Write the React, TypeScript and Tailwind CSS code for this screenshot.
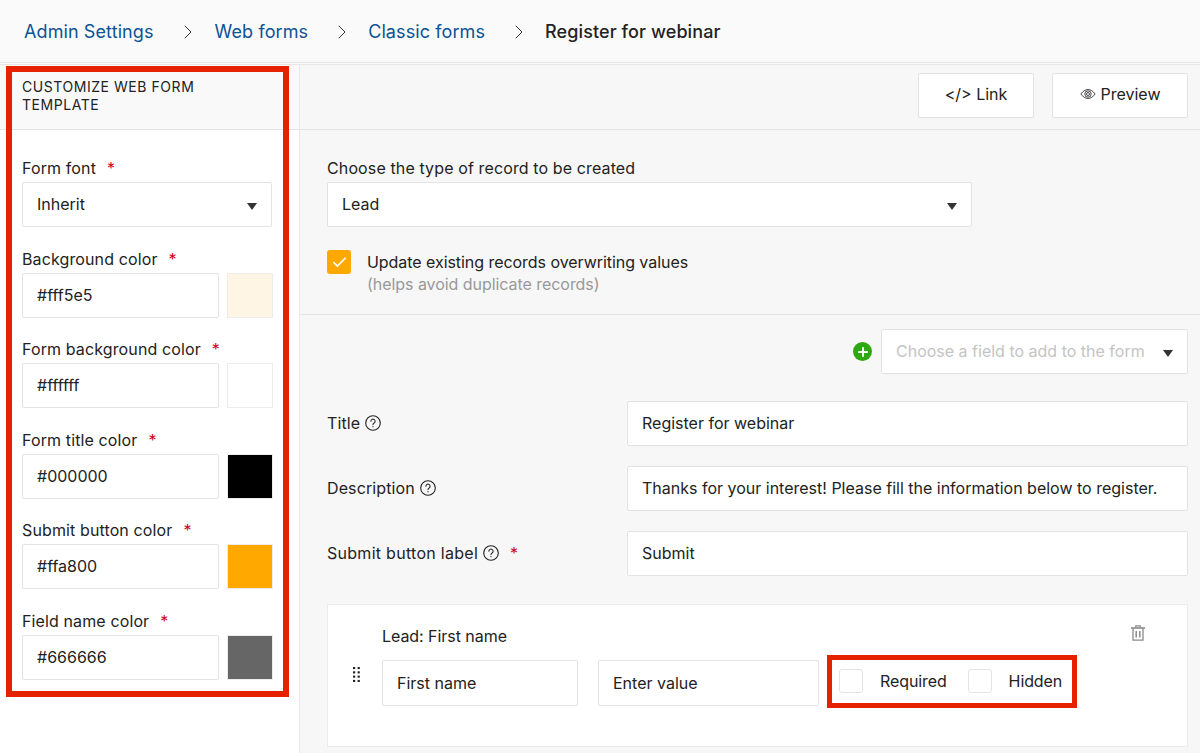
import { ChevronRight, Check, Plus } from 'lucide-react';

const colorFields = [
  { label: 'Background color', value: '#fff5e5', swatch: 'bg-[#fff5e5]' },
  { label: 'Form background color', value: '#ffffff', swatch: 'bg-white' },
  { label: 'Form title color', value: '#000000', swatch: 'bg-black' },
  { label: 'Submit button color', value: '#ffa800', swatch: 'bg-[#ffa800]' },
  { label: 'Field name color', value: '#666666', swatch: 'bg-[#666666]' },
];

const box = 'flex h-[45px] items-center rounded-[2px] border border-[#e3e3e3] bg-white pl-[14px] pr-[14px] text-[#222]';
const crumb = 'ml-[22px] mr-[15px] h-[24px] w-[24px] text-[#333]';

function Star() {
  return <span className="ml-[11px] text-[#d0021b]">*</span>;
}

function Caret() {
  return <span className="ml-auto mt-[5px] h-0 w-0 border-x-[5.5px] border-t-[7px] border-x-transparent border-t-[#333]" />;
}

function Help() {
  return (
    <svg viewBox="0 0 16 16" className="ml-[5px] h-4 w-4 shrink-0 text-[#222]" fill="none" stroke="currentColor" strokeWidth="1.1">
      <circle cx="8" cy="8" r="7.3" />
      <path d="M5.9 6.2a2.1 2.1 0 1 1 3.2 1.8c-.7.4-1.1.8-1.1 1.6" strokeLinecap="round" />
      <circle cx="8" cy="11.7" r=".6" fill="currentColor" stroke="none" />
    </svg>
  );
}

function Eye() {
  return (
    <svg viewBox="0 0 18 12" className="mr-[5px] h-[12px] w-[16px] text-[#333]" fill="none" stroke="currentColor" strokeWidth="1">
      <path d="M1 6c2-3 5-5 8-5s6 2 8 5c-2 3-5 5-8 5S3 9 1 6z" />
      <circle cx="9" cy="6" r="3.6" />
      <circle cx="9" cy="6" r="1.7" />
    </svg>
  );
}

function Grip() {
  return (
    <svg viewBox="0 0 7 15" className="h-[15px] w-[7px] text-[#222]" fill="currentColor">
      {[0, 4.3, 8.6, 12.9].map(y => (
        <g key={y}>
          <rect x="0" y={y} width="2.2" height="2.1" />
          <rect x="4.6" y={y} width="2.2" height="2.1" />
        </g>
      ))}
    </svg>
  );
}

function Trash() {
  return (
    <svg viewBox="0 0 16 16" className="-mt-[1px] h-[16px] w-[16px] text-[#8a8a8a]" fill="none" stroke="currentColor" strokeWidth="1.3">
      <path d="M1 3h14" strokeWidth="1.6" />
      <path d="M5.8 2.6V.8h4.4v1.8" />
      <path d="M3 3.4v11.8h10V3.4" />
      <path d="M6.2 6v6.6M9.8 6v6.6" strokeWidth="1.5" />
    </svg>
  );
}

function FormRow({ children, value }: { children: React.ReactNode; value: string }) {
  return (
    <div className="flex items-center">
      <div className="flex w-[300px] items-center pb-[2px] tracking-[0.12px]">{children}</div>
      <div className={`${box} flex-1 pb-[2px]`}>{value}</div>
    </div>
  );
}

export default function App() {
  return (
    <div className="relative h-[753px] w-[1200px] overflow-hidden bg-white text-[16px] leading-[20px] text-[#222] [font-family:Inter,'Noto_Sans',sans-serif]">
      {/* Breadcrumb */}
      <div className="flex h-[65px] items-center border-b-[3px] border-double border-[#e6e6e6] bg-[#fafafa] pl-[24px] pt-[2px] text-[18px] tracking-[0.1px]">
        <span className="text-[#0b5394]">Admin Settings</span>
        <ChevronRight className={crumb} strokeWidth={1} />
        <span className="text-[#0b5394]">Web forms</span>
        <ChevronRight className={crumb} strokeWidth={1} />
        <span className="-ml-px text-[#0b5394]">Classic forms</span>
        <ChevronRight className={crumb} strokeWidth={1} />
        <span className="-ml-px font-medium text-[#222]">Register for webinar</span>
      </div>

      <div className="flex h-[688px]">
        {/* Template sidebar */}
        <div className="w-[299px] shrink-0 bg-white">
          <div className="flex h-[65px] items-center border-b-[1.5px] border-[#e3e3e3] bg-[#f9f9f9] pb-[2px] pl-[22px] pr-[40px] text-[14px] leading-[18px] tracking-[0.55px]">
            CUSTOMIZE WEB FORM TEMPLATE
          </div>
          <div className="flex flex-col gap-[21.6px] pl-[22px] pr-[27px] pt-[28px]">
            <div>
              <div className="flex h-[24px] items-start tracking-[0.12px]">Form font<Star /></div>
              <div className={`${box} pb-[2px]`}>Inherit<Caret /></div>
            </div>
            {colorFields.map(f => (
              <div key={f.label}>
                <div className="flex h-[24px] items-start tracking-[0.12px]">{f.label}<Star /></div>
                <div className="flex gap-[8px]">
                  <div className={`${box} w-[197px] shrink-0 pb-[1px]`}>{f.value}</div>
                  <div className="h-[45px] w-[46px] shrink-0 border border-[#ececec] bg-white">
                    <div className={`h-full w-full ${f.swatch}`} />
                  </div>
                </div>
              </div>
            ))}
          </div>
        </div>

        {/* Main form settings */}
        <div className="flex-1 border-l-[1.5px] border-[#e9e9e9] bg-[#f7f7f7]">
          <div className="flex h-[65px] items-start justify-end gap-[18px] border-b-[1.5px] border-[#e3e3e3] pr-[12px] pt-[8px]">
            <div className="flex h-[45px] w-[116px] items-center justify-center rounded-[2px] border border-[#e3e3e3] bg-white pb-[3px]">&lt;/&gt; Link</div>
            <div className="flex h-[45px] w-[136px] items-center justify-center rounded-[2px] border border-[#e3e3e3] bg-white pb-[3px]"><Eye />Preview</div>
          </div>

          <div className="h-[185px] border-b-[1.5px] border-[#e3e3e3] pl-[27px] pt-[28px]">
            <div className="h-[24px] tracking-[0.12px]">Choose the type of record to be created</div>
            <div className={`${box} w-[645px] pb-[2px]`}>Lead<Caret /></div>
            <div className="mt-[23px] flex">
              <span className="mr-[16px] flex h-[24px] w-[24px] items-center justify-center rounded-[3px] bg-[#ffa800]">
                <Check className="h-[17px] w-[17px] text-white" strokeWidth={2.4} />
              </span>
              <div className="mt-[2px] tracking-[-0.05px]">
                <div className="h-[22px]">Update existing records overwriting values</div>
                <div className="text-[#999]">(helps avoid duplicate records)</div>
              </div>
            </div>
          </div>

          <div className="pl-[27px] pr-[12px] pt-[14px]">
            <div className="flex items-center justify-end">
              <span className="mr-[9px] flex h-[19px] w-[19px] items-center justify-center rounded-full bg-[#2fa80f]">
                <Plus className="h-[14px] w-[14px] text-white" strokeWidth={3.4} />
              </span>
              <div className={`${box} w-[307px] pb-[1px] text-[#c4c4c4]`}>Choose a field to add to the form<Caret /></div>
            </div>
            <div className="mt-[27px] flex flex-col gap-[20px]">
              <FormRow value="Register for webinar">Title<Help /></FormRow>
              <FormRow value="Thanks for your interest! Please fill the information below to register.">Description<Help /></FormRow>
              <FormRow value="Submit"><span className="tracking-[0.28px]">Submit button label</span><Help /><Star /></FormRow>
            </div>

            {/* Field card */}
            <div className="mt-[28px] flex h-[143px] border border-[#ebebeb] bg-white">
              <div className="flex w-[54px] justify-center pl-[3px] pt-[62px]"><Grip /></div>
              <div className="flex-1 pt-[21px]">
                <div className="flex h-[34px] items-start justify-between pr-[41px] tracking-[-0.05px]">
                  Lead: First name
                  <Trash />
                </div>
                <div className="flex items-start">
                  <div className={`${box} h-[46px] w-[196px] pb-[1px]`}>First name</div>
                  <div className={`${box} ml-[20px] h-[46px] w-[221px] pb-[1px]`}>Enter value</div>
                  <div className="ml-[20px] mt-[9px] flex items-center tracking-[-0.1px]">
                    <span className="h-[24px] w-[24px] rounded-[3px] border border-[#e3e3e3] bg-white" />
                    <span className="ml-[17px]">Required</span>
                    <span className="ml-[21px] h-[24px] w-[24px] rounded-[3px] border border-[#e3e3e3] bg-white" />
                    <span className="ml-[17px]">Hidden</span>
                  </div>
                </div>
              </div>
            </div>
          </div>
        </div>
      </div>

      {/* Red annotation boxes */}
      <div className="absolute left-[5.5px] top-[65.5px] h-[631.5px] w-[283px] border-[6px] border-[#e62100]" />
      <div className="absolute left-[827px] top-[655px] h-[53px] w-[250px] border-[5px] border-[#e62100]" />
    </div>
  );
}
